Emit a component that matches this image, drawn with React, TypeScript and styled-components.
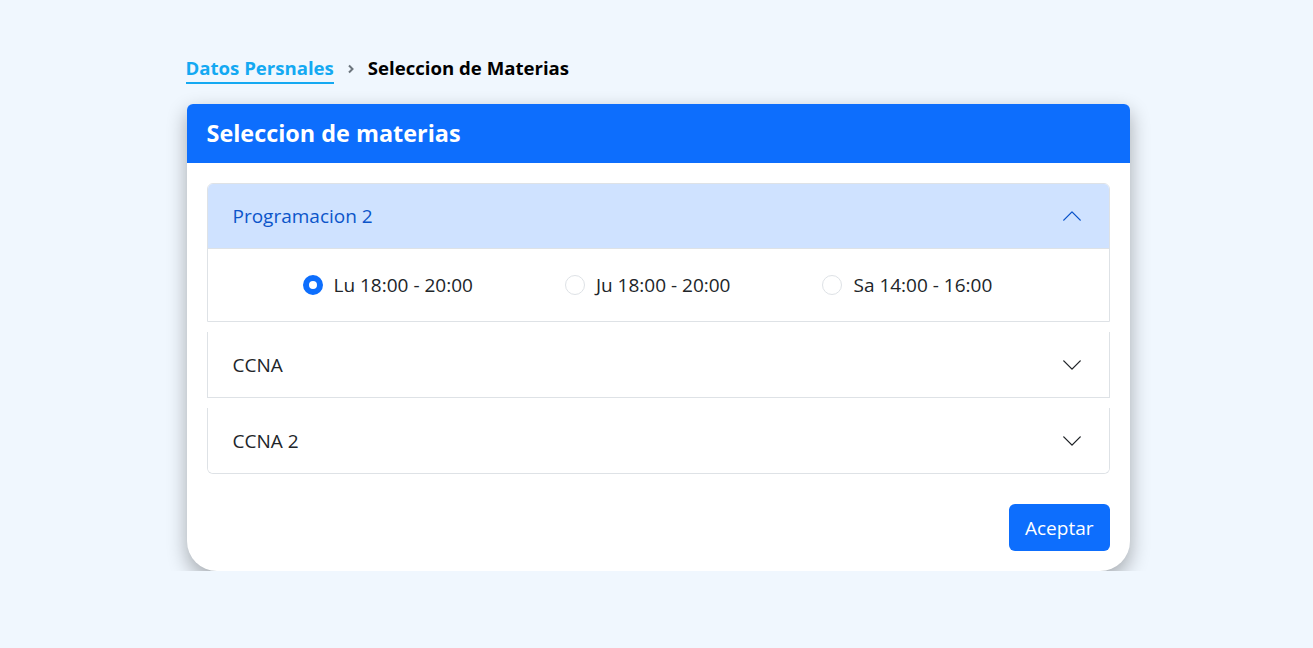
import React, { useState } from 'react';
import styled, { createGlobalStyle } from 'styled-components';

const GlobalStyle = createGlobalStyle`
  body {
    margin: 0;
    background: #f0f7fe;
    font-family: "Open Sans", "Noto Sans", sans-serif;
    color: #212529;
  }
`;

const Page = styled.main`
  width: 943px;
  margin: 0 auto;
  padding: 54px 0 0 3px;
`;

const Breadcrumb = styled.nav`
  display: flex;
  align-items: center;
  gap: 12px;
  margin-bottom: 20px;
  margin-left: -1px;
  font-size: 18.6px;
  font-weight: 700;
  line-height: 28px;
`;

const Crumb = styled.span<{ $active?: boolean }>`
  color: ${(p) => (p.$active ? '#14a9f2' : '#000')};
  border-bottom: 2px solid ${(p) => (p.$active ? '#14a9f2' : 'transparent')};
`;

const Sep = styled.span`
  color: #6c757d;
  display: flex;
`;

const Card = styled.section`
  background: #fff;
  border-radius: 6px 6px 30px 30px;
  box-shadow: 0 8px 20px rgba(0, 0, 0, 0.32);
  overflow: hidden;
`;

const CardHeader = styled.h2`
  margin: 0;
  background: #0d6efd;
  color: #fff;
  font-size: 23.4px;
  font-weight: 700;
  line-height: 59px;
  padding: 0 20px;
`;

const CardBody = styled.div`
  padding: 20px;
`;

const Accordion = styled.div`
  display: flex;
  flex-direction: column;
  gap: 10px;
`;

const Item = styled.div<{ $first?: boolean; $last?: boolean }>`
  border: 1px solid #dee2e6;
  border-top-width: ${(p) => (p.$first ? '1px' : '0')};
  border-radius: ${(p) => (p.$first ? '6px 6px 0 0' : p.$last ? '0 0 6px 6px' : '0')};
  overflow: hidden;
`;

const ItemButton = styled.button<{ $open?: boolean }>`
  all: unset;
  box-sizing: border-box;
  width: 100%;
  display: flex;
  align-items: center;
  justify-content: space-between;
  height: 65px;
  padding: 0 26px 0 25px;
  font-size: 19px;
  cursor: pointer;
  background: ${(p) => (p.$open ? '#cfe2ff' : '#fff')};
  color: ${(p) => (p.$open ? '#0c55ca' : '#212529')};
  border-bottom: ${(p) => (p.$open ? '1px solid #dee2e6' : 'none')};
`;

const Chevron = styled.svg<{ $open?: boolean }>`
  width: 22px;
  height: 22px;
  transform: ${(p) => (p.$open ? 'rotate(180deg)' : 'none')};
`;

const Options = styled.div`
  display: flex;
  align-items: center;
  gap: 92px;
  height: 72px;
  padding-left: 95px;
`;

const Option = styled.label`
  display: flex;
  align-items: center;
  gap: 11px;
  font-size: 19px;
  cursor: pointer;
`;

const Radio = styled.span<{ $checked?: boolean }>`
  box-sizing: border-box;
  width: 20px;
  height: 20px;
  border-radius: 50%;
  border: ${(p) => (p.$checked ? '6px solid #0d6efd' : '1px solid #dee2e6')};
  background: #fff;
`;

const Footer = styled.div`
  display: flex;
  justify-content: flex-end;
  margin-top: 30px;
`;

const Button = styled.button`
  background: #0d6efd;
  color: #fff;
  border: none;
  border-radius: 6px;
  font-family: inherit;
  font-size: 19px;
  height: 47px;
  padding: 0 16px;
  cursor: pointer;
`;

const ChevronIcon = ({ open }: { open?: boolean }) => (
  <Chevron
    $open={open}
    viewBox="0 0 16 16"
    fill="none"
    stroke={open ? '#0c55ca' : '#212529'}
    strokeLinecap="round"
    strokeLinejoin="round"
    strokeWidth={1}
  >
    <path d="M2 5L8 11L14 5" />
  </Chevron>
);

const subjects = ['Programacion 2', 'CCNA', 'CCNA 2'];
const slots = ['Lu 18:00 - 20:00', 'Ju 18:00 - 20:00', 'Sa 14:00 - 16:00'];

export default function App() {
  const [open, setOpen] = useState(0);
  const [slot, setSlot] = useState(0);

  return (
    <Page>
      <GlobalStyle />
      <Breadcrumb>
        <Crumb $active>Datos Persnales</Crumb>
        <Sep>
          <svg width="10" height="10" viewBox="0 0 10 10" fill="none" stroke="#6c757d" strokeWidth="2">
            <path d="M3 1.5L6.5 5L3 8.5" />
          </svg>
        </Sep>
        <Crumb>Seleccion de Materias</Crumb>
      </Breadcrumb>
      <Card>
        <CardHeader>Seleccion de materias</CardHeader>
        <CardBody>
          <Accordion>
            {subjects.map((s, i) => (
              <Item key={s} $first={i === 0} $last={i === subjects.length - 1}>
                <ItemButton $open={open === i} onClick={() => setOpen(open === i ? -1 : i)}>
                  {s}
                  <ChevronIcon open={open === i} />
                </ItemButton>
                {open === i && (
                  <Options>
                    {slots.map((t, j) => (
                      <Option key={t} onClick={() => setSlot(j)}>
                        <Radio $checked={slot === j} />
                        {t}
                      </Option>
                    ))}
                  </Options>
                )}
              </Item>
            ))}
          </Accordion>
          <Footer>
            <Button>Aceptar</Button>
          </Footer>
        </CardBody>
      </Card>
    </Page>
  );
}
